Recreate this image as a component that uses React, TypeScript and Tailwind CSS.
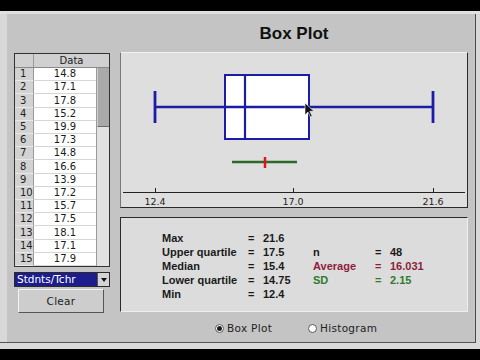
const data = ["14.8","17.1","17.8","15.2","19.9","17.3","14.8","16.6","13.9","17.2","15.7","17.5","18.1","17.1","17.9"];

const dv = "font-['DejaVu_Sans',sans-serif]";
const lib = "font-['Liberation_Sans',Arial,sans-serif]";

function Radio({ on, label }: { on: boolean; label: string }) {
  return (
    <div className="flex items-center gap-[3px]">
      <div className="w-[9px] h-[9px] rounded-full bg-white border border-[#5a5a5a] flex items-center justify-center">
        {on && <div className="w-[5px] h-[5px] rounded-full bg-[#1e1e1e]" />}
      </div>
      <span className={`${dv} text-[10.5px] text-[#222] tracking-[0.3px] leading-none`}>{label}</span>
    </div>
  );
}

function Plot() {
  const blue = "#1c1ca6";
  return (
    <svg width="346" height="154" viewBox="0 0 346 154">
      <line x1="34" y1="54" x2="312" y2="54" stroke={blue} strokeWidth="2.5" />
      <line x1="34" y1="38" x2="34" y2="70" stroke={blue} strokeWidth="2.8" />
      <line x1="312" y1="38" x2="312" y2="70" stroke={blue} strokeWidth="2.8" />
      <rect x="104" y="22" width="84" height="64" fill="white" stroke={blue} strokeWidth="2" />
      <line x1="104" y1="54" x2="188" y2="54" stroke={blue} strokeWidth="2.5" />
      <line x1="124" y1="22" x2="124" y2="86" stroke={blue} strokeWidth="2.2" />
      <line x1="111" y1="109" x2="176" y2="109" stroke="#2c6a2c" strokeWidth="2.5" />
      <line x1="144" y1="104" x2="144" y2="115" stroke="#e01414" strokeWidth="2.5" />
      <line x1="2" y1="139.5" x2="344" y2="139.5" stroke="#222" strokeWidth="1" />
      {[34, 172, 312].map((x) => (
        <line key={x} x1={x + 0.5} y1="135" x2={x + 0.5} y2="139" stroke="#222" strokeWidth="1" />
      ))}
      {[
        [34, "12.4"],
        [172, "17.0"],
        [312, "21.6"],
      ].map(([x, t]) => (
        <text key={t as string} x={x as number} y="152" textAnchor="middle" fontFamily="DejaVu Sans, sans-serif" fontSize="9.5" fill="#222">
          {t}
        </text>
      ))}
      <path d="M184 50 L184 62 L187 59 L189.5 64 L191.2 63.2 L188.8 58.3 L193 58.3 Z" fill="#111" stroke="#fff" strokeWidth="0.6" />
    </svg>
  );
}

export default function App() {
  const rows: [string, string, string, string, string, string][] = [
    ["Max", "=", "21.6", "", "", ""],
    ["Upper quartile", "=", "17.5", "n", "=", "48"],
    ["Median", "=", "15.4", "Average", "=", "16.031"],
    ["Lower quartile", "=", "14.75", "SD", "=", "2.15"],
    ["Min", "=", "12.4", "", "", ""],
  ];
  return (
    <div className="w-[480px] h-[360px] bg-black overflow-hidden">
      <div className="h-[11px]" />
      <div className="w-[480px] h-[338px] flex flex-col bg-[#d6d6d6]">
        <div className="h-[3px] bg-[#e0e0e0]" />
        <div className="flex h-[328px]">
          <div className="w-[7px] bg-[#d8d8d8]" />
          <div className="w-[468px] bg-[#c4c4c4] flex pl-[7px]">
            {/* left column */}
            <div className="w-[96px] pt-[39px] flex flex-col">
              <div className="h-[214px] border border-[#333] flex flex-col bg-[#d2d2d2]">
                <div className="h-[14px] flex border-b border-[#8a8a8a] bg-[#d0d0d0]">
                  <div className="w-[19px] border-r border-[#9a9a9a]" />
                  <div className={`flex-1 flex items-center justify-center ${dv} text-[10px] text-[#222] leading-none`}>Data</div>
                </div>
                <div className="flex-1 flex">
                  <div className="w-[81px] flex flex-col">
                    {data.map((d, i) => (
                      <div key={i} className="flex-1 flex">
                        <div className={`w-[19px] bg-[#d2d2d2] border-r border-b border-r-[#9a9a9a] border-b-[#e8e8e8] flex items-center pl-[5px] ${dv} text-[10px] text-[#222] leading-none`}>
                          {i + 1}
                        </div>
                        <div className={`flex-1 bg-white border-b border-[#d6d6d6] flex items-center justify-center ${dv} text-[10px] text-[#1a1a1a] leading-none`}>
                          {d}
                        </div>
                      </div>
                    ))}
                  </div>
                  <div className="w-[13px] flex flex-col bg-[#e2e2e2] border-l border-[#9a9a9a]">
                    <div className="h-[59px] bg-[#a9a9a9] border-l border-l-[#cfcfcf] border-b border-b-[#6a6a6a]" />
                  </div>
                </div>
              </div>
              <div className="mt-[5px] h-[15px] w-[96px] border border-[#2a2a2a] flex bg-[#1c1c8c]">
                <div className={`flex-1 flex items-center pl-[2px] ${dv} text-[10.5px] text-white leading-none`}>Stdnts/Tchr</div>
                <div className="w-[12px] bg-[#d4d4d4] border-l border-[#555] flex items-center justify-center">
                  <div className="w-0 h-0 border-l-[3px] border-r-[3px] border-t-[4px] border-l-transparent border-r-transparent border-t-[#111]" />
                </div>
              </div>
              <div className={`mt-[2px] ml-[4px] w-[86px] h-[24px] bg-[#cdcdcd] border border-t-[#f4f4f4] border-l-[#f4f4f4] border-b-[#555] border-r-[#555] flex items-center justify-center ${dv} text-[10.5px] text-[#222] tracking-[0.3px] leading-none`}>
                Clear
              </div>
            </div>
            {/* right column */}
            <div className="ml-[10px] w-[348px] flex flex-col">
              <div className={`h-[38px] flex items-center justify-center ${lib} font-bold text-[17px] text-[#111] leading-none`}>
                Box Plot
              </div>
              <div className="h-[156px] bg-[#dedede] border border-t-[#f2f2f2] border-l-[#777] border-r-[#2a2a2a] border-b-[#2a2a2a]">
                <Plot />
              </div>
              <div className="mt-[9px] h-[95px] bg-[#dcdcdc] border border-t-[#2a2a2a] border-l-[#2a2a2a] border-r-[#eeeeee] border-b-[#eeeeee] pt-[13px] pl-[41px]">
                <div className={`grid grid-cols-[86px_15px_50px_62px_15px_auto] auto-rows-[14px] ${lib} font-bold text-[11px] leading-[14px] text-[#1a1a1a]`}>
                  {rows.map((r, i) => (
                    <div key={i} className="contents">
                      <span>{r[0]}</span>
                      <span>{r[1]}</span>
                      <span>{r[2]}</span>
                      <span className={r[3] === "Average" ? "text-[#8c1f3c]" : r[3] === "SD" ? "text-[#2f7a2f]" : ""}>{r[3]}</span>
                      <span className={r[3] === "Average" ? "text-[#8c1f3c]" : r[3] === "SD" ? "text-[#2f7a2f]" : ""}>{r[4]}</span>
                      <span className={r[3] === "Average" ? "text-[#8c1f3c]" : r[3] === "SD" ? "text-[#2f7a2f]" : ""}>{r[5]}</span>
                    </div>
                  ))}
                </div>
              </div>
              <div className="h-[30px] flex items-center pl-[95px] gap-[36px] pt-[2px]">
                <Radio on={true} label="Box Plot" />
                <Radio on={false} label="Histogram" />
              </div>
            </div>
          </div>
          <div className="w-[1px] bg-[#4a4a4a]" />
          <div className="w-[4px] bg-[#d8d8d8]" />
        </div>
        <div className="h-[1px] bg-[#555] w-[476px]" />
        <div className="h-[6px] bg-[#dadada]" />
      </div>
    </div>
  );
}
